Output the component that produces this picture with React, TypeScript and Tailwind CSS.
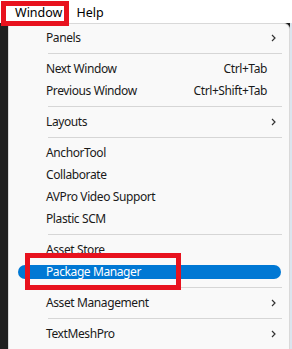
import React from "react";

type Item =
  | { kind: "item"; label: string; shortcut?: string; sub?: boolean; active?: boolean }
  | { kind: "sep" };

const items: Item[] = [
  { kind: "item", label: "Panels", sub: true },
  { kind: "sep" },
  { kind: "item", label: "Next Window", shortcut: "Ctrl+Tab" },
  { kind: "item", label: "Previous Window", shortcut: "Ctrl+Shift+Tab" },
  { kind: "sep" },
  { kind: "item", label: "Layouts", sub: true },
  { kind: "sep" },
  { kind: "item", label: "AnchorTool" },
  { kind: "item", label: "Collaborate" },
  { kind: "item", label: "AVPro Video Support" },
  { kind: "item", label: "Plastic SCM" },
  { kind: "sep" },
  { kind: "item", label: "Asset Store" },
  { kind: "item", label: "Package Manager", active: true },
  { kind: "sep" },
  { kind: "item", label: "Asset Management", sub: true },
  { kind: "sep" },
  { kind: "item", label: "TextMeshPro", sub: true },
  { kind: "sep" },
];

function Chevron() {
  return (
    <svg width="5" height="8" viewBox="0 0 5 8" className="shrink-0">
      <path d="M1 1 L4 4 L1 7" fill="none" stroke="#333" strokeWidth="1.2" />
    </svg>
  );
}

function MenuRow({ item }: { item: Extract<Item, { kind: "item" }> }) {
  if (item.active) {
    return (
      <div className="h-[22px] flex items-center pl-[9px] pr-[8px]">
        <div className="flex-1 h-[14px] rounded-full bg-[#0078d4] text-white flex items-center pl-[28px]">
          {item.label}
        </div>
      </div>
    );
  }
  return (
    <div className="h-[22px] flex items-center pl-[37px] pr-[13px] text-[#1a1a1a]">
      <span className="flex-1">{item.label}</span>
      {item.shortcut && <span className="mr-[9px]">{item.shortcut}</span>}
      {item.sub && <Chevron />}
    </div>
  );
}

export default function App() {
  return (
    <div className="w-[292px] h-[349px] overflow-hidden relative bg-[#1f1f1f] font-['Noto_Sans',sans-serif] text-[12px] tracking-[-0.4px] leading-none">
      <div className="h-[23px] pt-[3px] bg-white flex items-center text-black text-[12.5px] tracking-normal">
        <span className="ml-[15px]">Window</span>
        <span className="ml-[14px]">Help</span>
      </div>

      <div className="flex">
        <div className="w-[8px] shrink-0 bg-[#1f1f1f]" />
        <div className="w-[282px] bg-[#f9f9f9] border border-[#d9d9d9] rounded-tr-[6px] pt-[3px]">
          {items.map((it, i) =>
            it.kind === "sep" ? (
              <div key={i} className="ml-[39px] mr-[7px] my-[4px] h-px bg-[#d6d6d6]" />
            ) : (
              <MenuRow key={i} item={it} />
            )
          )}
        </div>
        <div className="w-[2px] shrink-0 bg-[#dbe5ee]" />
      </div>

      <div className="absolute left-[1px] top-[1px] w-[68px] h-[25px] border-[5px] border-[#e8121e]" />
      <div className="absolute left-[25px] top-[253px] w-[156px] h-[37px] border-[5px] border-[#e8121e]" />
    </div>
  );
}
